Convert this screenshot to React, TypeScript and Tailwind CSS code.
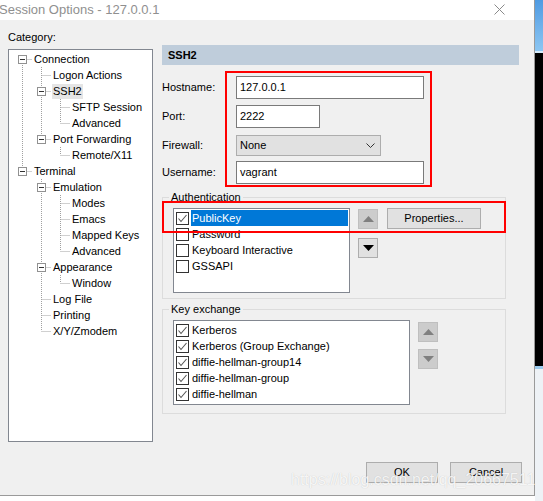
import React from "react";

type Row = { label: string; level: number; box?: boolean; last?: boolean; first?: boolean; anc: boolean[]; sel?: boolean };

const rows: Row[] = [
  { label: "Connection", level: 0, box: true, first: true, anc: [] },
  { label: "Logon Actions", level: 1, anc: [true] },
  { label: "SSH2", level: 1, box: true, anc: [true], sel: true },
  { label: "SFTP Session", level: 2, anc: [true, true] },
  { label: "Advanced", level: 2, last: true, anc: [true, true] },
  { label: "Port Forwarding", level: 1, box: true, last: true, anc: [true] },
  { label: "Remote/X11", level: 2, last: true, anc: [true, false] },
  { label: "Terminal", level: 0, box: true, last: true, anc: [] },
  { label: "Emulation", level: 1, box: true, anc: [false] },
  { label: "Modes", level: 2, anc: [false, true] },
  { label: "Emacs", level: 2, anc: [false, true] },
  { label: "Mapped Keys", level: 2, anc: [false, true] },
  { label: "Advanced", level: 2, last: true, anc: [false, true] },
  { label: "Appearance", level: 1, box: true, anc: [false] },
  { label: "Window", level: 2, last: true, anc: [false, true] },
  { label: "Log File", level: 1, anc: [false] },
  { label: "Printing", level: 1, anc: [false] },
  { label: "X/Y/Zmodem", level: 1, last: true, anc: [false] },
];

const DOT = { stroke: "#a0a0a0", strokeWidth: 1, strokeDasharray: "1 1" };

function TreeRow({ row }: { row: Row }) {
  const L = row.level;
  const w = 19 * (L + 1);
  const cx = 9.5 + 19 * L;
  return (
    <div className="flex h-[16px] items-center">
      <svg width={w} height={16} className="shrink-0">
        {row.anc.map((c, i) =>
          c ? <line key={i} x1={9.5 + 19 * i} y1={0} x2={9.5 + 19 * i} y2={16} {...DOT} /> : null
        )}
        {!(L === 0 && row.first) && <line x1={cx} y1={0} x2={cx} y2={8} {...DOT} />}
        {!row.last && <line x1={cx} y1={8} x2={cx} y2={16} {...DOT} />}
        <line x1={cx} y1={8.5} x2={w} y2={8.5} {...DOT} />
        {row.box && (
          <g>
            <rect x={cx - 4} y={4.5} width={8} height={8} fill="#fff" stroke="#919191" />
            <line x1={cx - 2.5} y1={8.5} x2={cx + 2.5} y2={8.5} stroke="#333" />
          </g>
        )}
      </svg>
      <span className={"ml-[1px] px-[1px] leading-[15px] whitespace-nowrap " + (row.sel ? "bg-[#e5e5e5]" : "")}>
        {row.label}
      </span>
    </div>
  );
}

function Check({ checked }: { checked?: boolean }) {
  return (
    <span className="w-[13px] h-[13px] border border-[#333333] bg-white shrink-0 flex items-center justify-center">
      {checked && (
        <svg width="11" height="11" viewBox="0 0 11 11">
          <path d="M1.5 5.5 L4 8.5 L9.5 2" stroke="#555" strokeWidth="1.1" fill="none" />
        </svg>
      )}
    </span>
  );
}

function ListItem({ label, checked, sel }: { label: string; checked?: boolean; sel?: boolean }) {
  return (
    <div className="flex h-[16px] items-center pl-[2px]">
      <Check checked={checked} />
      <span
        className={
          "ml-[2px] pl-[1px] leading-[16px] h-[16px] whitespace-nowrap " +
          (sel ? "flex-1 mr-[1px] bg-[#0078d7] text-white" : "")
        }
      >
        {label}
      </span>
    </div>
  );
}

function ArrowBtn({ up, enabled }: { up?: boolean; enabled?: boolean }) {
  return (
    <div
      className={
        "w-[20px] h-[20px] border flex items-center justify-center " +
        (enabled ? "bg-[#e1e1e1] border-[#adadad]" : "bg-[#cccccc] border-[#bfbfbf]")
      }
    >
      <svg width="11" height="6" viewBox="0 0 11 6">
        {up ? (
          <path d="M5.5 0 L11 6 L0 6 Z" fill={enabled ? "#000" : "#808080"} />
        ) : (
          <path d="M0 0 L11 0 L5.5 6 Z" fill={enabled ? "#000" : "#808080"} />
        )}
      </svg>
    </div>
  );
}

function Btn({ children, w }: { children: React.ReactNode; w: string }) {
  return (
    <div className={"h-[21px] border border-[#adadad] bg-[#e1e1e1] flex items-center justify-center " + w}>
      {children}
    </div>
  );
}

function Field({ label, children, mt }: { label: string; children: React.ReactNode; mt: string }) {
  return (
    <div className={"flex items-center " + mt}>
      <span className="w-[74px] shrink-0">{label}</span>
      {children}
    </div>
  );
}

export default function App() {
  return (
    <div className="relative w-[543px] h-[501px] overflow-hidden bg-white flex font-['Liberation_Sans',Arial,sans-serif] text-[11px] text-black">
      {/* dialog */}
      <div className="w-[535px] h-[496px] shrink-0 flex flex-col border-r border-b border-[#9a9a9a]">
        {/* title bar */}
        <div className="h-[20px] bg-white flex items-center justify-between shrink-0">
          <span className="ml-[-1px] text-[13px] text-[#8f8f8f] leading-[20px]">Session Options - 127.0.0.1</span>
          <svg width="11" height="11" viewBox="0 0 11 11" className="mr-[29px] mt-[-2px]">
            <path d="M0.5 0.5 L10.5 10.5 M10.5 0.5 L0.5 10.5" stroke="#8a8a8a" strokeWidth="1" />
          </svg>
        </div>
        {/* body */}
        <div className="flex-1 bg-[#f0f0f0] flex flex-col">
          <div className="flex">
            {/* left column */}
            <div className="ml-[8px] w-[145px] pt-[10px] flex flex-col shrink-0">
              <div className="h-[15px] leading-[15px]">Category:</div>
              <div className="mt-[4px] h-[393px] border border-[#828790] bg-white pt-[1px] pl-[4px]">
                {rows.map((r, i) => (
                  <TreeRow key={i} row={r} />
                ))}
              </div>
            </div>
            {/* right column */}
            <div className="ml-[9px] w-[357px] flex flex-col">
              <div className="mt-[25px] h-[20px] bg-[#bfcddb] pl-[6px] font-bold flex items-center">SSH2</div>
              <Field label="Hostname:" mt="mt-[11px]">
                <div className="w-[188px] h-[23px] border border-[#7a7a7a] bg-white pl-[3px] flex items-center">127.0.0.1</div>
              </Field>
              <Field label="Port:" mt="mt-[6px]">
                <div className="w-[84px] h-[23px] border border-[#7a7a7a] bg-white pl-[3px] flex items-center">2222</div>
              </Field>
              <Field label="Firewall:" mt="mt-[7px]">
                <div className="w-[145px] h-[21px] border border-[#adadad] bg-[#e1e1e1] pl-[3px] pr-[5px] flex items-center justify-between">
                  <span>None</span>
                  <svg width="9" height="5" viewBox="0 0 9 5">
                    <path d="M0.5 0.5 L4.5 4.5 L8.5 0.5" stroke="#333" fill="none" strokeWidth="1" />
                  </svg>
                </div>
              </Field>
              <Field label="Username:" mt="mt-[5px]">
                <div className="w-[188px] h-[23px] border border-[#7a7a7a] bg-white pl-[3px] flex items-center">vagrant</div>
              </Field>

              <fieldset className="mt-[6px] w-[344px] border border-[#dcdcdc] pb-[5px]">
                <legend className="ml-[6px] px-[2px] leading-[14px]">Authentication</legend>
                <div className="flex mt-[4px] pl-[10px]">
                  <div className="w-[177px] h-[85px] border border-[#828790] bg-white pt-[1px]">
                    <ListItem label="PublicKey" checked sel />
                    <ListItem label="Password" />
                    <ListItem label="Keyboard Interactive" />
                    <ListItem label="GSSAPI" />
                  </div>
                  <div className="ml-[8px] flex flex-col pt-[1px] gap-[9px]">
                    <ArrowBtn up />
                    <ArrowBtn enabled />
                  </div>
                  <div className="ml-[9px]">
                    <Btn w="w-[94px]">Properties...</Btn>
                  </div>
                </div>
              </fieldset>

              <fieldset className="mt-[3px] w-[344px] border border-[#dcdcdc] pb-[8px]">
                <legend className="ml-[6px] px-[2px] leading-[14px]">Key exchange</legend>
                <div className="flex mt-[4px] pl-[10px]">
                  <div className="w-[237px] h-[85px] border border-[#828790] bg-white pt-[1px]">
                    <ListItem label="Kerberos" checked />
                    <ListItem label="Kerberos (Group Exchange)" checked />
                    <ListItem label="diffie-hellman-group14" checked />
                    <ListItem label="diffie-hellman-group" checked />
                    <ListItem label="diffie-hellman" checked />
                  </div>
                  <div className="ml-[8px] flex flex-col pt-[2px] gap-[7px]">
                    <ArrowBtn up />
                    <ArrowBtn />
                  </div>
                </div>
              </fieldset>
            </div>
          </div>
          {/* footer */}
          <div className="mt-auto mb-[12px] pr-[12px] flex justify-end gap-[12px]">
            <Btn w="w-[72px]">OK</Btn>
            <Btn w="w-[72px]">Cancel</Btn>
          </div>
        </div>
      </div>

      {/* background window strip */}
      <div className="flex-1 flex flex-col">
        <div className="h-[51px] bg-gradient-to-b from-[#4f9be2] to-[#8cc6f2]" />
        <div className="h-[2px] bg-[#d6ecfb]" />
        <div className="h-[313px] bg-black" />
        <div className="h-[3px] bg-[#9ccbee]" />
        <div className="flex-1 bg-[#eef2f6]" />
      </div>

      {/* annotation overlays */}
      <div className="absolute left-[225px] top-[71px] w-[207px] h-[116px] border-2 border-[#ff0000]" />
      <div className="absolute left-[162px] top-[201px] w-[344px] h-[32px] border-2 border-[#ff0000]" />

      {/* watermark */}
      <div className="absolute left-[291px] top-[470px] text-[16px] leading-[20px] whitespace-nowrap text-[rgba(255,255,255,0.85)] [text-shadow:0_0_1px_rgba(0,0,0,0.2)]">
        https://blog.csdn.net/qq_20667511
      </div>
    </div>
  );
}
